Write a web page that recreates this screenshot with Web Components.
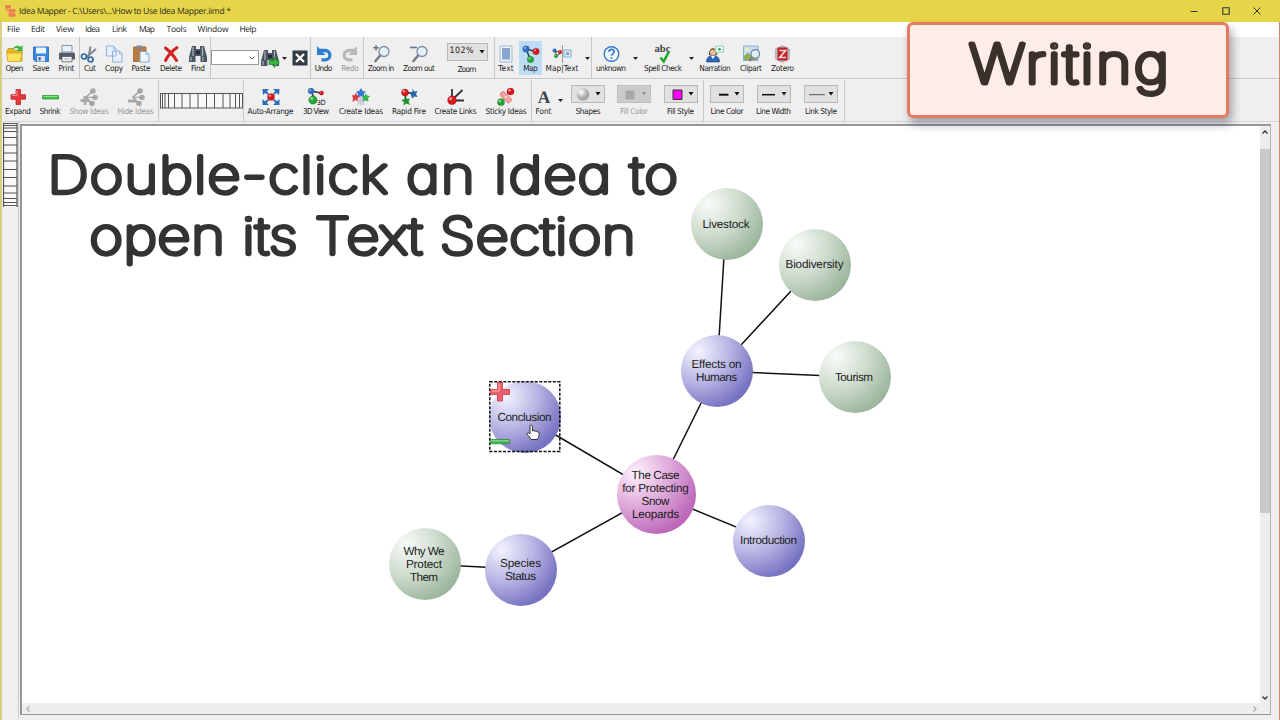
<!DOCTYPE html>
<html lang="en">
<head>
<meta charset="utf-8">
<title>Idea Mapper</title>
<style>
    body {
        margin: 0;
        width: 1280px;
        height: 720px;
        overflow: hidden;
        font-family: "Liberation Sans", sans-serif;
        text-rendering: geometricPrecision;
    }
</style>
</head>
<body>
<idea-mapper></idea-mapper>

<script>
const ball = (x, y, r, c) => `<circle cx="${x}" cy="${y}" r="${r}" fill="${c}" stroke="#0004" stroke-width=".5"/><circle cx="${x - r * .3}" cy="${y - r * .35}" r="${r * .35}" fill="#fff8"/>`;
const RED = "#d8161c", BLUE = "#2b6fc9", GREEN = "#21a637";

const nodesIcon = ball(5, 5, 3.3, BLUE) + ball(15, 7.5, 3.3, RED) + ball(9.5, 15.5, 3.3, GREEN);
const binoculars = `<path d="M4 2h4v3h4V2h4l3 11v5h-6.500v-6h-5v6H1v-5z" fill="#4a5561"/><path d="M5 3v9M14.500 3v9M3 13v4M15 13v4" stroke="#a9b6c2" stroke-width="1.200"/><path d="M8 7h4v3H8z" fill="#222b35"/>`;
const lens = `<path d="M9.500 11L4.500 17" stroke="#777c86" stroke-width="2.600" stroke-linecap="round"/><circle cx="13" cy="7.500" r="5" fill="#e3effb" stroke="#7f8da0" stroke-width="1.300"/><path d="M10 7a3.300 3.300 0 0 1 3-2.800" stroke="#fff" fill="none"/>`;
const undoArrow = `<path d="M5 6.500h6.200a4.600 4.600 0 0 1 0 9.300H7.500" fill="none" stroke-width="3.300"/><path d="M3 2v9h8.500z" stroke="none"/>`;
const greyNodes = `<circle cx="14" cy="4" r="2.800"/><circle cx="16" cy="10.500" r="2.800"/><circle cx="13" cy="16.500" r="2.800"/><path d="M14 4L7 10l9 .5M7 10l6 6.500" fill="none" stroke="#999" stroke-width="1.200"/>`;

const ICONS = {
    open: `<path d="M2 6.500l1.500-2H8l1.500 2H17V17H3z" fill="#e6b91f" stroke="#b58a10" stroke-width=".7"/><path d="M1.500 9h15.500l-1.500 8.500H3z" fill="#ffe15a" stroke="#c79e1c" stroke-width=".7"/><path d="M8 5.500c1-4 5-5 7.500-2.500L17.500 1v6h-6l2-2c-1.500-1.500-3-1.500-5.500.5z" fill="#38b53a"/>`,
    save: `<path d="M2.500 3h15v14.500h-13l-2-2z" fill="#3c86dc" stroke="#1e62b4" stroke-width=".8"/><path d="M5 3.500h10v6H5z" fill="#eaf4ff"/><path d="M6 12h8v5.500H6z" fill="#d9e4ef"/><path d="M7.500 13h2.200v3.500H7.500z" fill="#3c6ea8"/>`,
    print: `<path d="M5 1.500h10V8H5z" fill="#e8f1fb" stroke="#6d7c8c" stroke-width=".8"/><path d="M3 8h14l1 2v5.500H2V10z" fill="#535c66"/><path d="M3 8.500h14" stroke="#9aa5b0"/><path d="M5 12.500h10v5.300H5z" fill="#f4f7fa" stroke="#515a63" stroke-width=".8"/><path d="M7 15h6" stroke="#aab"/>`,
    cut: `<path d="M10.500 2.500L8.800 12M16 5L6 13.500" stroke="#78858f" stroke-width="1.900"/><circle cx="4" cy="12.500" r="2.500" fill="none" stroke="#2f69a3" stroke-width="1.700"/><circle cx="10.500" cy="15.500" r="2.500" fill="none" stroke="#2f69a3" stroke-width="1.700"/>`,
    copy: `<path d="M2.500 2h7l2.500 2.500V12H2.500zM8.500 7h7l2.500 2.500V18H8.500z" fill="#e7f2ff" stroke="#86a9d6" stroke-width=".9"/><path d="M9.500 2v3H12M15.500 7v3H18" fill="none" stroke="#86a9d6" stroke-width=".8"/>`,
    paste: `<path d="M2.500 3h12.500v14.500H2.500z" fill="#b97b3e" stroke="#8e5725" stroke-width=".7"/><path d="M5.500 1.500h6V5h-6z" fill="#818991"/><path d="M9 7.500h6l3 3V18H9z" fill="#edf6ff" stroke="#81a4cf" stroke-width=".9"/><path d="M15 7.500v3h3" fill="none" stroke="#81a4cf" stroke-width=".8"/>`,
    delete: `<path d="M4.500 4C9 7.500 13 12 15.500 16.500M16 3.500C11 7 7 11.500 4.500 16.500" stroke="#d32222" stroke-width="3" stroke-linecap="round" fill="none"/>`,
    find: binoculars,
    findNext: binoculars + `<path d="M9 12.300h5V9.500l5.500 5-5.500 5v-3H9z" fill="#34b637" stroke="#187a1c" stroke-width=".7"/>`,
    close: `<rect x="2.500" y="2.500" width="15" height="15" fill="#333b47"/><path d="M6 6l8 8M14 6l-8 8" stroke="#fff" stroke-width="2.300"/>`,
    undo: `<g fill="#2e7fd2" stroke="#2e7fd2">${undoArrow}</g>`,
    redo: `<g fill="#b8b8b8" stroke="#b8b8b8" transform="matrix(-1 0 0 1 20 0)">${undoArrow}</g>`,
    zoomIn: lens + `<path d="M5 1v5.600M2.200 3.800h5.600" stroke="#65758a" stroke-width="1.500"/>`,
    zoomOut: lens + `<path d="M1 3.500h7" stroke="#65758a" stroke-width="1.600"/>`,
    text: `<path d="M4 2h12v16H4z" fill="#eef4fb" stroke="#9db7d6" stroke-width="1"/><path d="M6 4h8v11.500H6z" fill="#89a7cf"/>`,
    map: `<path d="M15 7.500L5 5l4.500 10.500" fill="none" stroke="#344" stroke-width="1.500"/>` + nodesIcon,
    mapText: `<path d="M3 7l6 1.500L5 12z" fill="none" stroke="#355"/>` + ball(2.500, 6.500, 1.900, BLUE) + ball(8, 8, 1.900, RED) + ball(4, 12, 1.900, GREEN) + `<path d="M10.500 1v18" stroke="#999"/><path d="M12 6h7v7h-7z" fill="#dbe9f8" stroke="#86a8cc"/><path d="M14 8h3v3h-3z" fill="#86a8cc"/>`,
    unknown: `<circle cx="10.500" cy="10" r="7.300" fill="#f5faff" stroke="#2f78ca" stroke-width="1.400"/><path d="M8 8c0-3.500 5.200-3.300 5.200-.4 0 2-2.700 2-2.700 4.200" fill="none" stroke="#2f78ca" stroke-width="1.700"/><circle cx="10.500" cy="14" r="1.100" fill="#2f78ca"/>`,
    spell: `<text x="1.500" y="8" font-family="Liberation Serif, serif" font-weight="bold" font-size="10.500" textLength="16" lengthAdjust="spacingAndGlyphs" fill="#454545">abc</text><path d="M7.500 13.500l3.200 4 5.300-10" stroke="#22a52a" stroke-width="2.600" fill="none"/>`,
    narration: `<path d="M1.500 18c0-5 3-6.500 6.500-6.500s6.500 1.500 6.500 6.500z" fill="#2d67b3" stroke="#173f79" stroke-width=".6"/><path d="M4 11c-.5-9 8-9 8 0z" fill="#664127"/><circle cx="8" cy="8.500" r="3" fill="#edbd92"/><path d="M6 12l2 3 2-3z" fill="#fff"/><path d="M10.500 2h8v6h-4l-2.500 2.500V8h-1.500z" fill="#edfff6" stroke="#79b69e" stroke-width=".7"/><path d="M13.500 3.500v3.500l3-1.800z" fill="#1b9e43"/>`,
    clipart: `<path d="M2.500 2h14.500v14.500H2.500z" fill="#c8def5" stroke="#7a9dc4" stroke-width=".8"/><path d="M3 12l4-3.500 4 4 3-2 2.500 2V16H3z" fill="#8fae58"/><circle cx="6" cy="5.500" r="1.500" fill="#fff5a8"/><path d="M11.500 13L8.500 17" stroke="#787b83" stroke-width="2.300"/><circle cx="14.300" cy="10" r="4.300" fill="#e2f1fee0" stroke="#71829a" stroke-width="1.200"/>`,
    zotero: `<path d="M9.500 1.500l7 3.500v10l-7 3.500-7-3.500V5z" fill="#b9b9bb" stroke="#a0a0a2" stroke-width=".6"/><path d="M4.500 3.500h10v13h-10z" fill="#c32128"/><path d="M6.300 6.500h6.200l-5.700 7h6.200" fill="none" stroke="#f4dada" stroke-width="1.700"/>`,
    plus: `<path d="M8 2.500h4.500v5.200h5v4.500h-5v5.300H8v-5.300H3V7.700h5z" fill="#e5383b" stroke="#b3191d" stroke-width=".7"/><path d="M9 3.500v5H4" fill="none" stroke="#ff9c97" stroke-width=".9"/>`,
    minus: `<path d="M2.500 8.500h16v3.500h-16z" fill="#3fc748" stroke="#27902e" stroke-width=".7"/><path d="M3.500 9.500h14" stroke="#a2efa0" stroke-width=".7"/>`,
    showIdeas: `<g fill="#aaa">${greyNodes}<path d="M4.500 9h3v3h3v3h-3v3h-3v-3h-3v-3h3z"/></g>`,
    hideIdeas: `<g fill="#aaa">${greyNodes}<path d="M2 12.500h9v3H2z"/></g>`,
    autoArrange: `<path d="M4 4l12 12M16 4L4 16" stroke="#2e6dbb" stroke-width="2.200"/><path d="M1.500 2h6.500L2 8zM18.500 2H12l6 6zM1.500 18v-6L8 18zM18.500 18v-6L12 18z" fill="#2e6dbb"/><path d="M6.500 6.500h7v7h-7z" fill="#fff9"/>` + ball(10, 10, 3.600, RED),
    view3d: `<path d="M15 6L5 4l4 9" fill="none" stroke="#333" stroke-width="1.400"/>` + ball(5, 4, 3, BLUE) + ball(15.500, 6, 2.200, RED) + ball(7, 13, 4.300, GREEN) + `<text x="11" y="18" font-family="Liberation Sans" font-size="7.500" textLength="8.500" lengthAdjust="spacingAndGlyphs" fill="#111">3D</text>`,
    createIdeas: `<path d="M10 10L5 8M10 9V4M10 10l6-1M9 11l-2 7M10 11v7M11 11l2 7" stroke="#cfc9e0" stroke-width="2"/><path d="M10 1l1.800 3 3 .5-2 2.500.7 3.500L10 9l-3.500 1.500L7 7 5 4.500 8.200 4z" fill="#3978d2"/><path d="M5 5.500l1 3 3 1-2.500 2 .5 3-2.500-1.500L1.500 15l.5-3.500L1 8l2.500.5z" fill="#dd3c41"/><path d="M14.500 6l1.500 2.500 3 .5-2 2.500.5 3-3-1-3 1 .5-3-1-3 3 .5z" fill="#3cb452"/>`,
    rapidFire: `<path d="M6 6l8 0M6 6l1 8" stroke="#222" stroke-width="1.500"/><path d="M13.500 2l2 2.500 3-.5-1.500 3 1.500 3-3.200-.5-2.300 2L12 8 10.500 5.500l3-.5z" fill="#2c65ab"/><path d="M6 9.500l2 2.500 3-.5-1.500 3L11 18l-3.500-1.500L4.500 18.500l.5-3.500-3-2 3-.5z" fill="#1c9434"/>` + ball(6, 5.500, 3.600, RED),
    createLinks: `<path d="M6 13V2M6 13l10.500-10M6 13.500h12" stroke="#333" stroke-width="1.800"/>` + ball(6, 13.200, 4.500, RED),
    stickyIdeas: ball(14.500, 4.500, 3.600, RED) + ball(5, 15.200, 3.600, GREEN) + `<rect x="7" y="3.500" width="5.500" height="13" rx="2" fill="#f7a0a0" stroke="#d56e6e" stroke-width=".7" transform="rotate(-45 10 10)"/><path d="M8.500 10L10 8.500l1.500 1.500-1.500 1.500z" fill="#ffe0dc"/>`,
    font: `<text x="3.800" y="15.700" font-family="Liberation Serif, serif" font-size="17.500" font-weight="bold" textLength="12.500" lengthAdjust="spacingAndGlyphs" fill="#3b424b">A</text>`
};

const SWATCHES = {
    sphere: `<radialGradient id="s" cx=".35" cy=".3"><stop stop-color="#fff"/><stop offset="1" stop-color="#a9a9a9"/></radialGradient><circle cx="11" cy="8.500" r="6.300" fill="url(#s)"/>`,
    grey: `<path d="M7.500 4.500h9v9h-9z" fill="#a8a8a8"/>`,
    magenta: `<path d="M8 4h9v9.500H8z" fill="#f0f" stroke="#333"/>`,
    short: `<path d="M8 8.700h9.500" stroke="#111" stroke-width="2"/>`,
    medium: `<path d="M4 8.700h13" stroke="#111" stroke-width="1.500"/>`,
    thin: `<path d="M4 8.700h16" stroke="#444" stroke-width=".9"/>`
};

// Stretches or tightens its text to the given width in pixels
class FitText extends HTMLElement {
    connectedCallback() {
        this.attachShadow({mode: "open"}).innerHTML = `
            <style>
                :host { display: inline-block; white-space: nowrap; }
            </style>
            <slot></slot>`;
        const gap = (Number(this.getAttribute("w")) - this.getBoundingClientRect().width) / (this.textContent.length - 1);
        this.style.letterSpacing = gap + "px";
        this.style.marginRight = -gap + "px";
    }
}

class DropArrow extends HTMLElement {
    connectedCallback() {
        this.attachShadow({mode: "open"}).innerHTML = `
            <style>
                :host { display: flex; justify-content: center; flex: none; }
                svg { display: block; margin-top: 19.500px; }
            </style>
            <svg width="5" height="3"><path d="M0 0h5L2.500 3z" fill="#222"/></svg>`;
    }
}

class ToolButton extends HTMLElement {
    connectedCallback() {
        const label = this.getAttribute("label");
        this.attachShadow({mode: "open"}).innerHTML = `
            <style>
                :host {
                    display: flex;
                    flex-direction: column;
                    align-items: center;
                    flex: none;
                    padding-top: 7px;
                    box-sizing: border-box;
                    font: 8.200px/9px "DejaVu Sans Condensed", "DejaVu Sans", sans-serif;
                    color: #222;
                }
                :host([disabled]) { color: #989898; }
                :host([active]) {
                    background: #bcdcf5;
                    height: 34px;
                    margin: 4px 2px 0;
                    padding-top: 3px;
                }
                svg { display: block; flex: none; overflow: visible; }
            </style>
            <svg width="20" height="20" viewBox="0 0 20 20">${ICONS[this.getAttribute("icon")]}</svg>
            ${label ? `<fit-text w="${this.getAttribute("lw")}">${label}</fit-text>` : ""}`;
    }
}

class ToolSelect extends HTMLElement {
    connectedCallback() {
        const swatch = this.getAttribute("swatch");
        const value = this.getAttribute("value");
        this.attachShadow({mode: "open"}).innerHTML = `
            <style>
                :host {
                    display: flex;
                    flex-direction: column;
                    align-items: center;
                    flex: none;
                    padding-top: 5.500px;
                    gap: 4px;
                    font: 8.200px/9px "DejaVu Sans Condensed", "DejaVu Sans", sans-serif;
                    color: #222;
                }
                :host([disabled]) { color: #989898; }
                .box {
                    display: flex;
                    align-items: center;
                    box-sizing: border-box;
                    width: 34px;
                    height: 18px;
                    background: #e1e1e1;
                    border: 1px solid #b8b8b8;
                }
                .box.wide { width: 41px; padding-left: 2px; gap: 5px; font-size: 8.800px; }
                :host([disabled]) .box { background: #cbcbcb; border-color: #c0c0c0; }
                svg { display: block; flex: none; }
            </style>
            <div class="box ${value ? "wide" : ""}">
                ${value ? `<fit-text w="24">${value}</fit-text>` : `<svg width="23" height="17">${SWATCHES[swatch]}</svg>`}
                <svg width="6" height="4"><path d="M.5 0h5L3 3.500z" fill="${this.hasAttribute("disabled") ? "#999" : "#111"}"/></svg>
            </div>
            <fit-text w="${this.getAttribute("lw")}">${this.getAttribute("label")}</fit-text>`;
    }
}

class ToolGroup extends HTMLElement {
    connectedCallback() {
        this.attachShadow({mode: "open"}).innerHTML = `
            <style>
                :host {
                    display: flex;
                    flex: none;
                    box-sizing: border-box;
                    height: 100%;
                    border-right: 1px solid #c6c6c6;
                }
                :host([last]) { border: 0; }
            </style>
            <slot></slot>`;
    }
}

// Tick ruler, horizontal or vertical; ticks crowd towards both ends
class TickRuler extends HTMLElement {
    connectedCallback() {
        const vertical = this.hasAttribute("vertical");
        const ticks = [0.5, 2.500, 5, 8.500, 14.500, 22, 30, 38, 46.500, 54.500, 63, 70, 75.500, 79.500, 82.500];
        const w = vertical ? 15 : 83, h = vertical ? 84 : 16;
        const lines = ticks.map(t => vertical ? `M0 ${t}h14` : `M${t} 1v14`).join("");
        this.attachShadow({mode: "open"}).innerHTML = `
            <style>
                :host { display: block; flex: none; width: ${w}px; height: ${h}px; }
                svg { display: block; background: #f8f8f8; }
            </style>
            <svg width="${w}" height="${h}">
                <path d="${lines}" stroke="#555" stroke-width="1"/>
                <path d="${vertical ? "M14 0v84M.5 0v84" : "M0 15h83M0 .5h83"}" stroke="#555" stroke-width="1.200"/>
            </svg>`;
    }
}

class TitleBar extends HTMLElement {
    connectedCallback() {
        this.attachShadow({mode: "open"}).innerHTML = `
            <style>
                :host {
                    display: flex;
                    align-items: center;
                    justify-content: space-between;
                    height: 22px;
                    padding: 0 19px 0 4px;
                    background: #e6d548;
                    font: 8.600px/12px "Open Sans", "Noto Sans", sans-serif;
                    color: #2b2a1c;
                }
                .name, .controls { display: flex; align-items: center; gap: 3px; }
                .controls { gap: 23.500px; }
                svg { display: block; }
            </style>
            <div class="name">
                <svg width="12" height="12" viewBox="0 0 12 12"><g fill="#ee7f52"><rect x="1" y="0" width="6" height="3.500" rx="1"/><rect x="4.500" y="4" width="7" height="3.500" rx="1"/><rect x="4.500" y="8.300" width="7" height="3.500" rx="1"/></g><path d="M2.500 3v2.500h2M6 7v3" fill="none" stroke="#ee7f52" stroke-width="1.200"/></svg>
                <fit-text w="212">Idea Mapper - C:\\Users\\...\\How to Use Idea Mapper.iimd *</fit-text>
            </div>
            <div class="controls">
                <svg width="8" height="8"><path d="M.5 4.500h7" stroke="#333"/></svg>
                <svg width="8" height="8"><path d="M.8.8h6.400v6.400H.8z" fill="none" stroke="#333" stroke-width="1.100"/></svg>
                <svg width="8" height="8"><path d="M.5.5l7 7M7.500.5l-7 7" stroke="#333"/></svg>
            </div>`;
    }
}

class MenuBar extends HTMLElement {
    connectedCallback() {
        const items = [["File", 13, 11], ["Edit", 14, 11], ["View", 18, 11], ["Idea", 15, 12], ["Link", 15, 12], ["Map", 16, 11.500], ["Tools", 20, 11], ["Window", 31, 11], ["Help", 17, 0]];
        this.attachShadow({mode: "open"}).innerHTML = `
            <style>
                :host {
                    display: flex;
                    align-items: center;
                    height: 15px;
                    padding-left: 5px;
                    background: #fff;
                    font: 8.500px/12px "Open Sans", "Noto Sans", sans-serif;
                    color: #222;
                }
                span { flex: none; }
            </style>
            ${items.map(([text, w, gap]) => `<span style="width: ${w + gap}px"><fit-text w="${w}">${text}</fit-text></span>`).join("")}`;
    }
}

class ToolBars extends HTMLElement {
    connectedCallback() {
        this.attachShadow({mode: "open"}).innerHTML = `
            <style>
                :host { display: block; background: #efefef; }
                .row { display: flex; height: 42px; box-sizing: border-box; border-bottom: 1px solid #c9c9c9; }
                .row + .row { border-bottom-color: #d4d4d4; height: 43px; padding-top: .5px; }
                .combo {
                    display: flex;
                    align-items: center;
                    justify-content: flex-end;
                    flex: none;
                    box-sizing: border-box;
                    width: 48px;
                    height: 15px;
                    margin: 13px 0 0 0;
                    padding-right: 3px;
                    background: #fff;
                    border: 1px solid #9a9a9a;
                }
                tick-ruler { margin: 13px 0 0 1px; }
            </style>
            <div class="row">
                <tool-group style="width: 78px">
                    <tool-button icon="open" label="Open" lw="18" style="width: 25px"></tool-button>
                    <tool-button icon="save" label="Save" lw="17" style="width: 28px"></tool-button>
                    <tool-button icon="print" label="Print" lw="16" style="width: 23px"></tool-button>
                </tool-group>
                <tool-group style="width: 131px">
                    <tool-button icon="cut" label="Cut" lw="12" style="width: 20px"></tool-button>
                    <tool-button icon="copy" label="Copy" lw="18" style="width: 28px"></tool-button>
                    <tool-button icon="paste" label="Paste" lw="19" style="width: 26px"></tool-button>
                    <tool-button icon="delete" label="Delete" lw="22" style="width: 34px"></tool-button>
                    <tool-button icon="find" label="Find" lw="14" style="width: 20px"></tool-button>
                </tool-group>
                <tool-group style="width: 100px">
                    <div class="combo"><svg width="6" height="4"><path d="M.5.5L3 3 5.500.5" fill="none" stroke="#666"/></svg></div>
                    <tool-button icon="findNext" style="width: 22px; padding-top: 11px"></tool-button>
                    <drop-arrow style="width: 6px"></drop-arrow>
                    <tool-button icon="close" style="width: 25px; padding-top: 10.500px"></tool-button>
                </tool-group>
                <tool-group style="width: 53px">
                    <tool-button icon="undo" label="Undo" lw="17.500" style="width: 25px"></tool-button>
                    <tool-button icon="redo" label="Redo" lw="17.500" disabled style="width: 28px"></tool-button>
                </tool-group>
                <tool-group style="width: 131px">
                    <tool-button icon="zoomIn" label="Zoom in" lw="26.500" style="width: 34px"></tool-button>
                    <tool-button icon="zoomOut" label="Zoom out" lw="32" style="width: 42px"></tool-button>
                    <tool-select value="102%" label="Zoom" lw="19" style="width: 54px"></tool-select>
                </tool-group>
                <tool-group style="width: 97px">
                    <tool-button icon="text" label="Text" lw="15.500" style="width: 22px"></tool-button>
                    <tool-button icon="map" label="Map" lw="14.500" active style="width: 23px"></tool-button>
                    <tool-button icon="mapText" label="Map|Text" lw="33" style="width: 36px"></tool-button>
                    <drop-arrow style="width: 14px"></drop-arrow>
                </tool-group>
                <tool-group last>
                    <tool-button icon="unknown" label="unknown" lw="30" style="width: 38px"></tool-button>
                    <drop-arrow style="width: 10px"></drop-arrow>
                    <tool-button icon="spell" label="Spell Check" lw="38" style="width: 46px"></tool-button>
                    <drop-arrow style="width: 10px"></drop-arrow>
                    <tool-button icon="narration" label="Narration" lw="31.500" style="width: 38px"></tool-button>
                    <tool-button icon="clipart" label="Clipart" lw="22" style="width: 34px"></tool-button>
                    <tool-button icon="zotero" label="Zotero" lw="23" style="width: 29px"></tool-button>
                </tool-group>
            </div>
            <div class="row">
                <tool-group style="width: 157px">
                    <tool-button icon="plus" label="Expand" lw="26" style="width: 32px"></tool-button>
                    <tool-button icon="minus" label="Shrink" lw="21" style="width: 32px"></tool-button>
                    <tool-button icon="showIdeas" label="Show Ideas" lw="39" disabled style="width: 46px"></tool-button>
                    <tool-button icon="hideIdeas" label="Hide Ideas" lw="36" disabled style="width: 47px"></tool-button>
                </tool-group>
                <tool-group style="width: 85px"><tick-ruler></tick-ruler></tool-group>
                <tool-group style="width: 288px">
                    <tool-button icon="autoArrange" label="Auto-Arrange" lw="46" style="width: 53px"></tool-button>
                    <tool-button icon="view3d" label="3D View" lw="26" style="width: 38px"></tool-button>
                    <tool-button icon="createIdeas" label="Create Ideas" lw="44" style="width: 52px"></tool-button>
                    <tool-button icon="rapidFire" label="Rapid Fire" lw="34" style="width: 44px"></tool-button>
                    <tool-button icon="createLinks" label="Create Links" lw="42" style="width: 49px"></tool-button>
                    <tool-button icon="stickyIdeas" label="Sticky Ideas" lw="41" style="width: 52px"></tool-button>
                </tool-group>
                <tool-group style="width: 172px">
                    <tool-button icon="font" label="Font" lw="16" style="width: 23px"></tool-button>
                    <drop-arrow style="width: 10px"></drop-arrow>
                    <tool-select swatch="sphere" label="Shapes" lw="25" style="width: 46px"></tool-select>
                    <tool-select swatch="grey" label="Fill Color" lw="28" disabled style="width: 46px"></tool-select>
                    <tool-select swatch="magenta" label="Fill Style" lw="27" style="width: 47px"></tool-select>
                </tool-group>
                <tool-group style="width: 141px">
                    <tool-select swatch="short" label="Line Color" lw="33" style="width: 46px"></tool-select>
                    <tool-select swatch="medium" label="Line Width" lw="35" style="width: 47px"></tool-select>
                    <tool-select swatch="thin" label="Link Style" lw="32" style="width: 48px"></tool-select>
                </tool-group>
            </div>`;
    }
}

class MapNode extends HTMLElement {
    connectedCallback() {
        const kinds = {
            green: "#f8fbf8, #ccdacc 42%, #9fb8a0 75%, #8aaa8b",
            blue: "#f3f3ff, #b4b2e2 42%, #7a75c3 75%, #6660ba",
            pink: "#fff0fc, #dca6d8 42%, #be6abb 75%, #ae52ab"
        };
        const r = Number(this.getAttribute("r") || 36);
        const lines = this.getAttribute("lines").split("|").map(line => line.split(":"));
        this.attachShadow({mode: "open"}).innerHTML = `
            <style>
                :host {
                    position: absolute;
                    left: ${this.getAttribute("x") - r}px;
                    top: ${this.getAttribute("y") - r}px;
                    width: ${r * 2}px;
                    height: ${r * 2}px;
                    display: flex;
                    flex-direction: column;
                    align-items: center;
                    justify-content: center;
                    box-sizing: border-box;
                    padding: 2.500px 1px 0 0;
                    border-radius: 50%;
                    background: radial-gradient(circle at 24% 22%, ${kinds[this.getAttribute("kind")]} 100%);
                    font: 11.700px/12.800px "Liberation Sans", Arial, sans-serif;
                    color: #1c1c1c;
                }
            </style>
            ${lines.map(([text, w]) => `<fit-text w="${w}">${text}</fit-text>`).join("")}`;
    }
}

class MapCanvas extends HTMLElement {
    connectedCallback() {
        this.attachShadow({mode: "open"}).innerHTML = `
            <style>
                :host { display: block; position: relative; background: #fff; overflow: hidden; }
                .links { display: block; }
                .caption {
                    position: absolute;
                    left: 0;
                    top: 0;
                    font: 100 50.500px Inter, sans-serif;
                    font-feature-settings: "cv11";
                    fill: #353331;
                    stroke: #353331;
                    stroke-width: 4.300px;
                    stroke-linejoin: round;
                    stroke-linecap: round;
                }
                .selection { position: absolute; left: 467px; top: 255px; }
            </style>
            <svg class="links" width="1238" height="577" viewBox="22 126 1238 577">
                <path d="M726 224L717 371L815.500 264.500M855 377L717 371L656 494L525 417M769 540.500L656 494L521 569L424.500 564" fill="none" stroke="#111" stroke-width="1.500"/>
            </svg>
            <map-node x="704.500" y="98" kind="green" lines="Livestock:47"></map-node>
            <map-node x="793" y="138.500" kind="green" lines="Biodiversity:58"></map-node>
            <map-node x="832.500" y="251" kind="green" lines="Tourism:38"></map-node>
            <map-node x="695" y="245" kind="blue" lines="Effects on:50|Humans:41"></map-node>
            <map-node x="634" y="368.500" r="39.500" kind="pink" lines="The Case:48|for Protecting:66.500|Snow:28|Leopards:47"></map-node>
            <map-node x="747" y="414.500" kind="blue" lines="Introduction:57"></map-node>
            <map-node x="499" y="443.500" kind="blue" lines="Species:41|Status:31"></map-node>
            <map-node x="402.500" y="438" kind="green" lines="Why We:41|Protect:36|Them:28"></map-node>
            <map-node x="503" y="291" kind="blue" lines="Conclusion:54"></map-node>
            <svg class="selection" width="72" height="72">
                <path d="M.8.8h70v69.700H.8z" fill="none" stroke="#111" stroke-width="1.500" stroke-dasharray="3 1.500"/>
                <path d="M8.500 1.500h5v7h7v5h-7v6.500h-5v-6.500H1.500v-5h7z" fill="#f0606a" stroke="#c23a48" stroke-width=".8"/>
                <path d="M10 2.500V10H2.500" fill="none" stroke="#ffb3b3"/>
                <path d="M1.500 58.500h19v4.300h-19z" fill="#3fb552" stroke="#2b8a3f" stroke-width=".7"/>
                <path d="M2 59.800h18" stroke="#97e2a0"/>
                <path d="M41 53V45.500c0-2 2.300-2 2.400 0V50c1-1 2.300-.6 2.300.4.900-.8 2.100-.3 2.200.6 1.300-.6 2.200.2 2.200 1.400 0 2.700-.5 3.900-1.600 6.100h-6.300c-1-2.200-2.800-3.300-4-5.300-.7-1.600 1.300-2 2.800-.2z" fill="#fff" stroke="#222" stroke-width=".9"/>
            </svg>
            <svg class="caption" width="684" height="150">
                <g transform="scale(1.14 1)">
                    <text x="22.400" y="66.500" textLength="553">Double-click an Idea to</text>
                    <text x="59.300" y="127.500" textLength="479">open its Text Section</text>
                </g>
            </svg>`;
    }
}

class WorkArea extends HTMLElement {
    connectedCallback() {
        this.attachShadow({mode: "open"}).innerHTML = `
            <style>
                :host { display: flex; flex: 1; background: #efefef; }
                .side { box-sizing: border-box; width: 17px; height: 596px; margin-right: 1px; padding: 1px 0 0 1px; border-right: 1px solid #ccc; }
                .frame {
                    display: grid;
                    grid-template: 577px 11px / 1238px 10px;
                    align-self: start;
                    margin-top: 2px;
                    border: 2px solid #969699;
                    border-width: 2px 1px 1px 2px;
                    border-right-color: #b4b4bb;
                }
                .vbar, .hbar {
                    display: flex;
                    justify-content: space-between;
                    align-items: center;
                    background: #eee;
                }
                .vbar { box-sizing: border-box; flex-direction: column; padding: 4px 0 3px; }
                .hbar { grid-column: span 2; padding: 0 13px 0 4px; }
                .thumb { width: 10px; height: 364px; margin: 15px 0 auto; background: #cacaca; }
                svg { display: block; flex: none; }
            </style>
            <div class="side"><tick-ruler vertical></tick-ruler></div>
            <div class="frame">
                <map-canvas></map-canvas>
                <div class="vbar">
                    <svg width="6" height="4"><path d="M.5 3.500L3 1l2.500 2.500" fill="none" stroke="#333" stroke-width="1.300"/></svg>
                    <div class="thumb"></div>
                    <svg width="6" height="4"><path d="M.5.5L3 3 5.500.5" fill="none" stroke="#333" stroke-width="1.300"/></svg>
                </div>
                <div class="hbar">
                    <svg width="4" height="6"><path d="M3.500.5L1 3l2.500 2.500" fill="none" stroke="#aaa" stroke-width="1.300"/></svg>
                    <svg width="4" height="6"><path d="M.5.5L3 3 .5 5.500" fill="none" stroke="#aaa" stroke-width="1.300"/></svg>
                </div>
            </div>`;
    }
}

class TopicCard extends HTMLElement {
    connectedCallback() {
        this.attachShadow({mode: "open"}).innerHTML = `
            <style>
                :host {
                    position: absolute;
                    left: 907px;
                    top: 22px;
                    width: 322px;
                    height: 96px;
                    box-sizing: border-box;
                    border: 3px solid #e67a60;
                    border-radius: 6px;
                    background: #feede6;
                    box-shadow: 3px 6px 10px rgba(40, 40, 60, .4);
                }
                svg {
                    display: block;
                    font: 100 53.500px Inter, sans-serif;
                    font-feature-settings: "cv11";
                    fill: #3a302c;
                    stroke: #3a302c;
                    stroke-width: 5px;
                    stroke-linejoin: round;
                }
            </style>
            <svg width="316" height="90"><text transform="scale(1.12 1)" x="53" y="58" textLength="178">Writing</text></svg>`;
    }
}

class IdeaMapper extends HTMLElement {
    connectedCallback() {
        this.attachShadow({mode: "open"}).innerHTML = `
            <style>
                :host {
                    display: flex;
                    flex-direction: column;
                    position: relative;
                    width: 1280px;
                    height: 720px;
                    overflow: hidden;
                    background: #efefef;
                }
                .body {
                    display: flex;
                    flex-direction: column;
                    flex: 1;
                    box-sizing: border-box;
                    border-left: 2px solid #d8ce84;
                    border-right: 1px solid #cf8a6c;
                }
            </style>
            <title-bar></title-bar>
            <div class="body">
                <menu-bar></menu-bar>
                <tool-bars></tool-bars>
                <work-area></work-area>
            </div>
            <topic-card></topic-card>`;
    }
}

customElements.define("fit-text", FitText);
customElements.define("drop-arrow", DropArrow);
customElements.define("tool-button", ToolButton);
customElements.define("tool-select", ToolSelect);
customElements.define("tool-group", ToolGroup);
customElements.define("tick-ruler", TickRuler);
customElements.define("title-bar", TitleBar);
customElements.define("menu-bar", MenuBar);
customElements.define("tool-bars", ToolBars);
customElements.define("map-node", MapNode);
customElements.define("map-canvas", MapCanvas);
customElements.define("work-area", WorkArea);
customElements.define("topic-card", TopicCard);
customElements.define("idea-mapper", IdeaMapper);
</script>
</body>
</html>
